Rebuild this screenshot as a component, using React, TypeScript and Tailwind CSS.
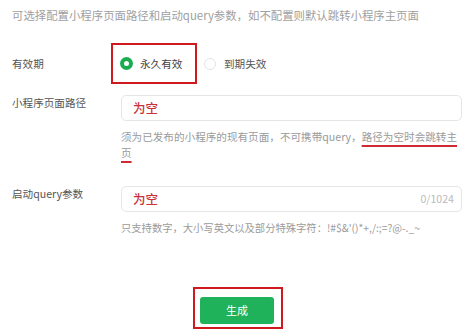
export default function App() {
  const font = { fontFamily: '"Noto Sans CJK SC", "Noto Sans", sans-serif' };
  return (
    <div className="w-[474px] h-[330px] bg-white overflow-hidden pl-3 relative" style={font}>
      <p className="pt-[7px] text-[11.4px] leading-4 text-[#a0a0a0] whitespace-nowrap">
        可选择配置小程序页面路径和启动query参数，如不配置则默认跳转小程序主页面
      </p>

      <div className="mt-[20px] flex items-center">
        <div className="w-[99px] text-[10.6px] text-[#555]">有效期</div>
        <div className="h-[41px] w-[86px] border-2 border-[#d0191f] flex items-center pl-[7px]">
          <span className="w-[13px] h-[13px] rounded-full bg-[#1aad4f] flex items-center justify-center">
            <span className="w-[5px] h-[5px] rounded-full bg-white" />
          </span>
          <span className="ml-[7px] text-[10.6px] text-[#444]">永久有效</span>
        </div>
        <span className="ml-[7px] w-[12px] h-[12px] rounded-full border border-[#e3e3e3]" />
        <span className="ml-[8px] text-[10.6px] text-[#555]">到期失效</span>
      </div>

      <div className="mt-[11px] flex items-start">
        <div className="w-[109px] text-[10.6px] leading-4 text-[#555]">小程序页面路径</div>
        <div className="flex-1 mr-[12px]">
          <div className="h-[26px] border border-[#e6e6e6] rounded-[5px] flex items-center pl-[11px]">
            <span className="text-[12.5px] font-medium text-[#c8333a]">为空</span>
          </div>
          <p className="mt-[8px] text-[10.6px] leading-4 text-[#9a9a9a]">
            须为已发布的小程序的现有页面，不可携带query，
            <span className="underline decoration-[#cf2a33] decoration-[1.5px] underline-offset-[4px]">路径为空时会跳转主</span>
            <br />
            <span className="underline decoration-[#cf2a33] decoration-[1.5px] underline-offset-[4px]">页</span>
          </p>
        </div>
      </div>

      <div className="mt-[25px] flex items-start">
        <div className="w-[109px] text-[10.6px] leading-4 text-[#555]">启动query参数</div>
        <div className="flex-1 mr-[12px]">
          <div className="h-[26px] border border-[#e6e6e6] rounded-[5px] flex items-center justify-between pl-[11px] pr-[7px]">
            <span className="text-[12.5px] font-medium text-[#c8333a]">为空</span>
            <span className="text-[10.6px] text-[#bbbbbb]">0/1024</span>
          </div>
          <p className="mt-[8px] text-[10.3px] leading-4 text-[#9a9a9a] whitespace-nowrap">
            只支持数字，大小写英文以及部分特殊字符：!#$&amp;'()*+,/:;=?@-._~
          </p>
        </div>
      </div>

      <div className="mt-[51px] flex justify-center pr-[10px]">
        <div className="w-[90px] h-[42px] border-2 border-[#d0191f] pl-[5px] pt-[7px]">
          <button className="w-[74px] h-[27px] rounded-[3px] bg-[#1fb25a] text-white text-[11px]">
            生成
          </button>
        </div>
      </div>
    </div>
  );
}
